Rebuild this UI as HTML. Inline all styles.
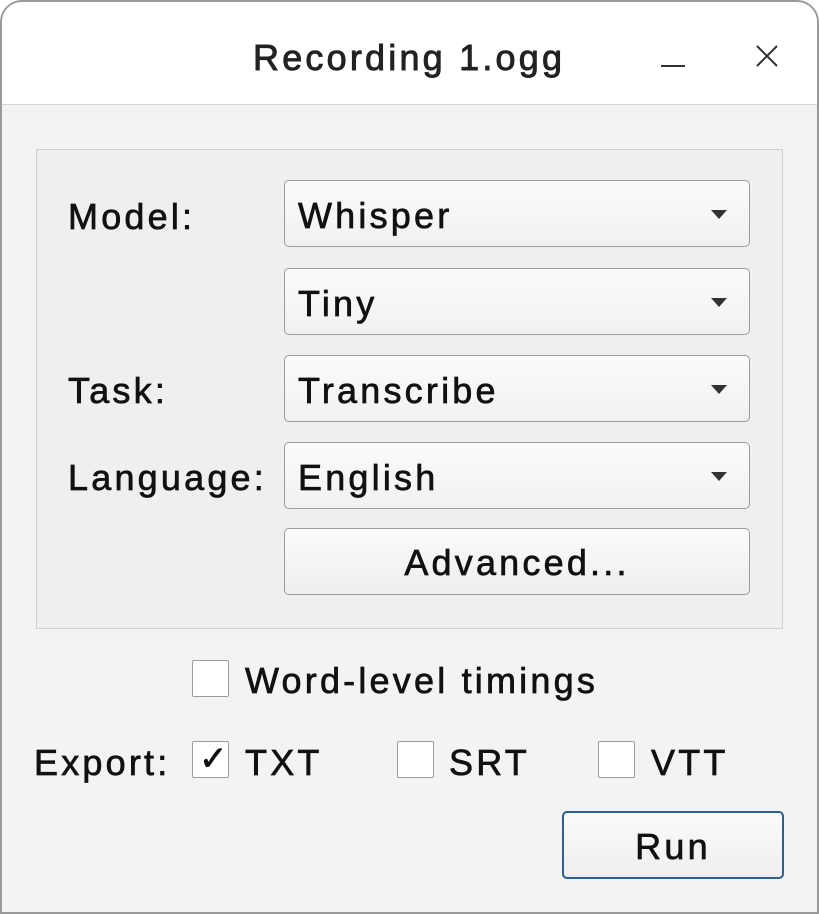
<!DOCTYPE html>
<html><head><style>
*{box-sizing:border-box;margin:0;padding:0}
body{width:819px;height:914px;background:#fff;font-family:"Liberation Sans",sans-serif;color:#111;position:relative;overflow:hidden}
.win{position:absolute;left:0;top:0;width:819px;height:914px;border:2px solid #9a9a9a;border-radius:22px 22px 0 0;background:#f3f3f3;overflow:hidden}
.title{position:absolute;left:0;top:0;width:100%;height:103px;background:#fff;border-bottom:1px solid #d6d6d6}
.t,.combo span,.btn{letter-spacing:3.2px;-webkit-text-stroke:0.7px #111}
.t{position:absolute;font-size:36px;white-space:nowrap;line-height:1}
.group{position:absolute;left:36px;top:149px;width:747px;height:480px;border:1px solid #d0d0d0;background:#efefef}
.combo{position:absolute;left:284px;width:466px;height:67px;border:1px solid #9c9c9c;border-radius:5px;background:linear-gradient(#fbfbfb,#f1f1f1)}
.combo span{position:absolute;left:13px;top:17px;font-size:36px;line-height:1}
.combo i{position:absolute;right:22px;top:29px;width:0;height:0;border-left:8px solid transparent;border-right:8px solid transparent;border-top:9px solid #333}
.cb{position:absolute;width:37px;height:37px;border:1px solid #9c9c9c;background:#fff;border-radius:2px}
.btn{position:absolute;border:1px solid #9c9c9c;border-radius:5px;background:linear-gradient(#fbfbfb,#eeeeee);text-align:center;font-size:36px}
</style></head><body>
<div class="win">
<div class="title"></div>
<div class="t" style="left:251px;top:38px;color:#222;-webkit-text-stroke:0.9px #222">Recording 1.ogg</div>
<div style="position:absolute;left:659px;top:63px;width:24px;height:2px;background:#333"></div>
<svg style="position:absolute;left:753px;top:42px" width="24" height="24"><path d="M2 2L22 22M22 2L2 22" stroke="#333" stroke-width="2"/></svg>
</div>
<div class="group"></div>
<div class="t" style="left:68px;top:199px">Model:</div>
<div class="t" style="left:68px;top:373px">Task:</div>
<div class="t" style="left:68px;top:460px">Language:</div>
<div class="combo" style="top:180px"><span>Whisper</span><i></i></div>
<div class="combo" style="top:268px"><span>Tiny</span><i></i></div>
<div class="combo" style="top:355px"><span>Transcribe</span><i></i></div>
<div class="combo" style="top:442px"><span>English</span><i></i></div>
<div class="btn" style="left:284px;top:528px;width:466px;height:67px;line-height:67px">Advanced...</div>
<div class="cb" style="left:192px;top:660px"></div>
<div class="t" style="left:245px;top:663px">Word-level timings</div>
<div class="t" style="left:34px;top:745px">Export:</div>
<div class="cb" style="left:192px;top:741px"></div>
<div class="t" style="left:199px;top:742px;font-size:34px;letter-spacing:0">✓</div>
<div class="t" style="left:245px;top:745px">TXT</div>
<div class="cb" style="left:397px;top:741px"></div>
<div class="t" style="left:449px;top:745px">SRT</div>
<div class="cb" style="left:598px;top:741px"></div>
<div class="t" style="left:651px;top:745px">VTT</div>
<div class="btn" style="left:562px;top:811px;width:222px;height:68px;line-height:68px;border:2px solid #2f5f8f">Run</div>
</body></html>
